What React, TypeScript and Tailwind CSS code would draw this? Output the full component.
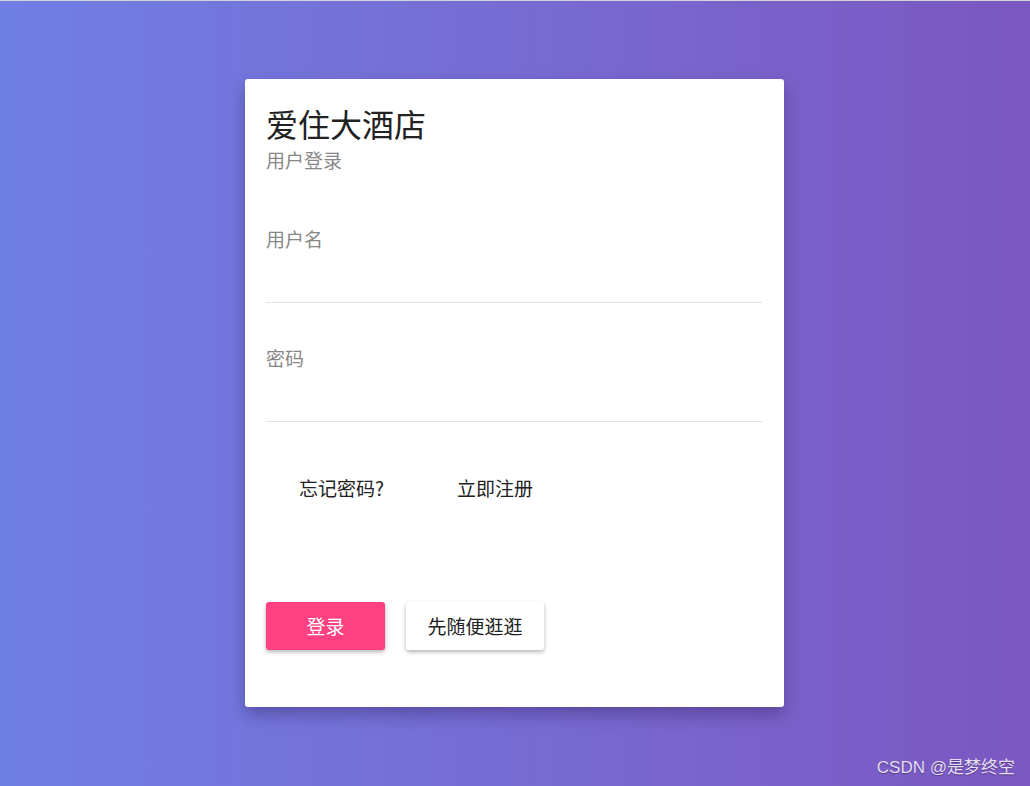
import React from "react";

const font = { fontFamily: '"Noto Sans CJK SC", "Noto Sans", sans-serif' };

export default function App() {
    return (
        <div
            className="relative w-full h-[786px] overflow-hidden bg-gradient-to-r from-[#6f7fe4] to-[#7b57c1] border-t border-[#d4d4d4]"
            style={font}
        >
            <div className="flex justify-center pt-[78px]">
                <div className="w-[539px] h-[628px] ml-[-1px] bg-white rounded-[3px] shadow-[0_8px_16px_rgba(40,20,80,0.35)] px-[21px] pt-[24px]">
                    {/* title */}
                    <h1 className="text-[32px] leading-[40px] text-[#222]">爱住大酒店</h1>
                    <p className="text-[19px] leading-[24px] text-[#888] mt-[5px]">用户登录</p>

                    {/* fields */}
                    <div className="mt-[55px] w-[496px]">
                        <label className="block text-[19px] leading-[24px] text-[#888]">用户名</label>
                        <input className="block w-full h-[52px] outline-none border-b border-[#e0e0e0] bg-transparent" />
                    </div>
                    <div className="mt-[43px] w-[496px]">
                        <label className="block text-[19px] leading-[24px] text-[#888]">密码</label>
                        <input type="password" className="block w-full h-[52px] outline-none border-b border-[#e0e0e0] bg-transparent" />
                    </div>

                    {/* links */}
                    <div className="flex mt-[54px] text-[19px] leading-[24px] text-[#222]">
                        <span className="ml-[33px]">忘记密码?</span>
                        <span className="ml-[73px]">立即注册</span>
                    </div>

                    {/* buttons */}
                    <div className="flex gap-[21px] mt-[102px]">
                        <button className="w-[119px] h-[48px] rounded-[3px] bg-[#ff4081] text-white text-[19px] shadow-[0_2px_4px_rgba(0,0,0,0.3)]">
                            登录
                        </button>
                        <button className="w-[138px] h-[48px] rounded-[3px] bg-white text-[#222] text-[19px] shadow-[0_2px_4px_rgba(0,0,0,0.3)]">
                            先随便逛逛
                        </button>
                    </div>
                </div>
            </div>

            <div
                className="absolute right-[15px] bottom-[6px] text-[17px] text-[#e4ddf3] [text-shadow:0_1px_1px_rgba(0,0,0,0.35)]"
                style={{ fontFamily: '"Liberation Sans", "Noto Sans CJK SC", sans-serif' }}
            >
                CSDN @是梦终空
            </div>
        </div>
    );
}
